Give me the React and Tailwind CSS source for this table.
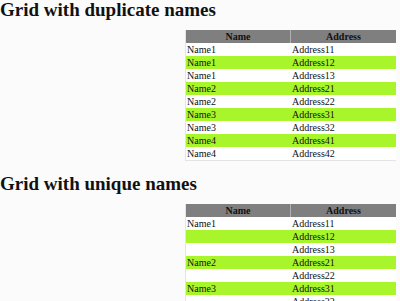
import React from "react";

const dup = [
  ["Name1", "Address11"],
  ["Name1", "Address12"],
  ["Name1", "Address13"],
  ["Name2", "Address21"],
  ["Name2", "Address22"],
  ["Name3", "Address31"],
  ["Name3", "Address32"],
  ["Name4", "Address41"],
  ["Name4", "Address42"],
];

const uniq = [
  ["Name1", "Address11"],
  ["", "Address12"],
  ["", "Address13"],
  ["Name2", "Address21"],
  ["", "Address22"],
  ["Name3", "Address31"],
  ["", "Address32"],
  ["", "Address33"],
  ["Name4", "Address41"],
  ["", "Address42"],
];

function Grid({ rows }) {
  return (
    <div className="ml-[185px] w-[211px] border-l border-b border-[#e4e4e4] text-[10px] leading-[13px] text-[#111]">
      <div className="grid grid-cols-[105px_1fr] bg-[#7f7f7f] font-bold text-[#111]">
        <div className="h-[13px] text-center border-r border-[#b0b0b0]">Name</div>
        <div className="h-[13px] text-center">Address</div>
      </div>
      {rows.map((r, i) => (
        <div
          key={i}
          className={
            "grid grid-cols-[105px_1fr] h-[13px] " +
            (i % 2 === 1 ? "bg-[#a8f52c]" : "bg-white")
          }
        >
          <div className="pl-[1px]">{r[0]}</div>
          <div className="pl-[1px]">{r[1]}</div>
        </div>
      ))}
    </div>
  );
}

export default function App() {
  return (
    <div
      className="w-[400px] h-[301px] overflow-hidden bg-[#fbfbfb]"
      style={{ fontFamily: '"Liberation Serif", "Times New Roman", serif' }}
    >
      <h2 className="text-[19px] leading-[20px] font-bold text-[#111]">Grid with duplicate names</h2>
      <div className="mt-[10px]">
        <Grid rows={dup} />
      </div>
      <h2 className="mt-[13px] text-[19px] leading-[20px] font-bold text-[#111]">Grid with unique names</h2>
      <div className="mt-[10px]">
        <Grid rows={uniq} />
      </div>
    </div>
  );
}
